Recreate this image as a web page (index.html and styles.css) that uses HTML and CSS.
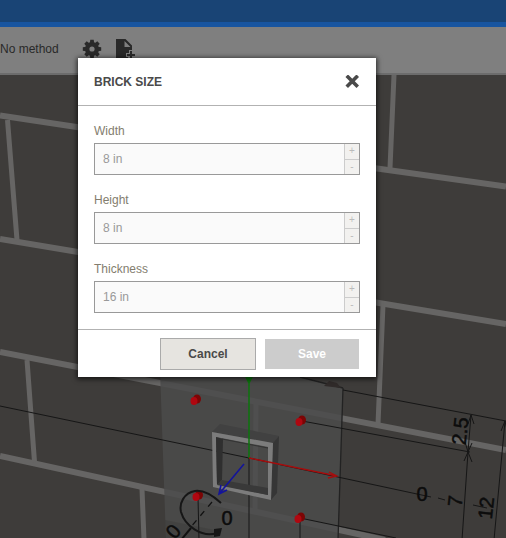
FILE: index.html
```html
<!DOCTYPE html>
<html lang="en">
<head>
  <meta charset="UTF-8">
  <meta name="viewport" content="width=device-width, initial-scale=1.0">
  <title>Brick Size</title>
  <link rel="stylesheet" href="styles.css">
</head>
<body>
  <header class="topbar"></header>

  <nav class="toolbar">
    <span class="method">No method</span>
    <button type="button" class="tool" aria-label="Settings">
      <svg width="20" height="20" viewBox="0 0 20 20">
        <g fill="#292929">
          <path fill-rule="evenodd" d="M10 3a7 7 0 1 0 0 14a7 7 0 0 0 0-14zM10 7.400a2.600 2.600 0 1 1 0 5.200a2.600 2.600 0 0 1 0-5.200z"/>
          <path id="tooth" d="M7.800 4.500L8.300.8h3.400l.5 3.700z"/>
          <use href="#tooth" transform="rotate(45 10 10)"/>
          <use href="#tooth" transform="rotate(90 10 10)"/>
          <use href="#tooth" transform="rotate(135 10 10)"/>
          <use href="#tooth" transform="rotate(180 10 10)"/>
          <use href="#tooth" transform="rotate(225 10 10)"/>
          <use href="#tooth" transform="rotate(270 10 10)"/>
          <use href="#tooth" transform="rotate(315 10 10)"/>
        </g>
      </svg>
    </button>
    <button type="button" class="tool" aria-label="New document">
      <svg width="20" height="20" viewBox="0 0 20 20">
        <path fill="#292929" fill-rule="evenodd" d="M1 0h9.500L17 6.500V11h-3v3h-3v4h2v2H1zM9.500 2v6h6z"/>
        <path stroke="#292929" stroke-width="2" d="M16 12v8M12 16h8"/>
      </svg>
    </button>
  </nav>

  <main class="scene">
    <svg class="drawing" viewBox="0 75 506 463" preserveAspectRatio="xMinYMin slice">
      <!-- mortar joints -->
      <g class="mortar">
        <path d="M0 115.500L90 129M0 239L90 254M0 352L506 450M0 456L385 540"/>
        <path d="M370 167.500L506 186.500M370 301.500L506 324"/>
        <path class="upright" d="M7.500 120L17 240M27 360L34.500 462M142 489L144 540M394 75L390 168M383 305L378 424M256 404L255 512"/>
      </g>

      <!-- mounting plate -->
      <path class="plate" d="M160 370H280L343 388L338 540H166z"/>
      <path d="M165 520L215 530L214 540H166z" fill="#3c3b3a" opacity=".5"/>
      <path d="M343 388L338 540M300 377L343 388" stroke="#222" stroke-width="1.300" fill="none"/>
      <path d="M324 386l5-5 8 2 4 5z" fill="#302b2a"/>

      <!-- dimension lines -->
      <g class="dims">
        <path d="M0 406L249 458L417 494M343 390L506 421M302 421L470 452M300 518L396 538M249 458V540M198 497L199 540M300 519V540"/>
        <path d="M417 494L431 497M438 498l7 2M473 505l14 3"/>
        <path d="M471 415L468 452L462 540M505 421L494 540"/>
        <path d="M468 424l3-9 3 9M465 442l3 10 4-9M464 461l4-9 4 10M501 431l4-10 2 9"/>
      </g>

      <!-- hollow box -->
      <path d="M212 432L220 424L279 436L273 443z" fill="#414141"/>
      <path d="M273 443L279 436L277 493L271 500z" fill="#363636"/>
      <path fill-rule="evenodd" d="M212 432L273 443L271 500L213 487zM216 437L217 484L268 495L268 447z" fill="#7c7c7c"/>
      <path d="M216 437L223 439L222 480L217 485z" fill="#2f2f2f"/>
      <path d="M217 485L222 480L268 488V495z" fill="#393939"/>
      <path d="M222 439L268 448" stroke="#333"/>

      <!-- axes -->
      <path d="M249 377V458M246 377h6l-3 6z" stroke="#0d740d" stroke-width="1.500" fill="#0d740d"/>
      <path d="M249 458L337 476M329 472l8 4-9 2" stroke="#a50d0d" stroke-width="1.300" fill="none"/>
      <path d="M244 464L219 494M221 485l-2 9 8-4" stroke="#14149a" stroke-width="1.600" fill="none"/>
      <path d="M212 502L190 528" stroke="#111" stroke-width="1.300" stroke-dasharray="6 6"/>
      <path d="M191 528L181 540" stroke="#111" stroke-width="2"/>

      <!-- anchors -->
      <g id="anchor">
        <ellipse cx="197" cy="399" rx="4" ry="4.500" fill="#7c0505"/>
        <ellipse cx="194" cy="401" rx="3.500" ry="4" fill="#af0710"/>
      </g>
      <use href="#anchor" x="105" y="21"/>
      <use href="#anchor" x="2" y="96"/>
      <use href="#anchor" x="104" y="118"/>

      <!-- rotation arrow -->
      <path d="M221 503C210 493 202 490 195 491C184 493 179 503 181 512C185 526 202 538 217 533" stroke="#161616" stroke-width="2" fill="none"/>
      <path d="M214 529l8-1-2 8-6 1z" fill="#161616"/>

      <g class="values">
        <text x="227" y="525">0</text>
        <text transform="translate(174 532) rotate(-50)" y="6">0</text>
        <text x="422" y="501">0</text>
        <text transform="translate(460 431) rotate(-84)" y="7">2.5</text>
        <text transform="translate(455 501) rotate(-84)" y="7">7</text>
        <text transform="translate(486 508) rotate(-84)" y="7">12</text>
      </g>
    </svg>
  </main>

  <div class="overlay">
    <form class="dialog" role="dialog" aria-labelledby="dialog-title">
      <div class="dialog-header">
        <h1 id="dialog-title">BRICK SIZE</h1>
        <button type="button" class="close" aria-label="Close">
          <svg width="14" height="14" viewBox="0 0 14 14">
            <path d="M3 2l8.500 8.500M11.500 2l-8.500 8.500" stroke="#4a4a4a" stroke-width="3.600" stroke-linecap="square"/>
          </svg>
        </button>
      </div>

      <div class="dialog-body">
        <div class="field">
          <label for="width">Width</label>
          <div class="spinner">
            <input type="text" id="width" value="8 in" disabled>
            <div class="steps">
              <button type="button" disabled>+</button>
              <button type="button" disabled>-</button>
            </div>
          </div>
        </div>
        <div class="field">
          <label for="height">Height</label>
          <div class="spinner">
            <input type="text" id="height" value="8 in" disabled>
            <div class="steps">
              <button type="button" disabled>+</button>
              <button type="button" disabled>-</button>
            </div>
          </div>
        </div>
        <div class="field">
          <label for="thickness">Thickness</label>
          <div class="spinner">
            <input type="text" id="thickness" value="16 in" disabled>
            <div class="steps">
              <button type="button" disabled>+</button>
              <button type="button" disabled>-</button>
            </div>
          </div>
        </div>
      </div>

      <div class="dialog-footer">
        <button type="button" class="btn cancel">Cancel</button>
        <button type="submit" class="btn save" disabled>Save</button>
      </div>
    </form>
  </div>
</body>
</html>
```
FILE: styles.css
```css
* {
  box-sizing: border-box;
}
body {
  margin: 0;
  min-height: 100vh;
  display: flex;
  flex-direction: column;
  position: relative;
  overflow: hidden;
  font-family: "Liberation Sans", Arial, sans-serif;
  font-size: 12px;
  background: #3e3c3a;
}
button,
input {
  font: inherit;
  margin: 0;
  padding: 0;
}
.topbar {
  height: 27px;
  background: #194475;
  border-bottom: 5px solid #1855a0;
}
.toolbar {
  display: flex;
  align-items: center;
  height: 48px;
  padding-bottom: 2px;
  background: #7f7f7f;
  border-bottom: 2px solid #6c6c6c;
}
.method {
  color: #292929;
  white-space: nowrap;
  margin-right: 23px;
}
.tool {
  display: flex;
  border: none;
  background: none;
  margin-right: 13px;
}
.scene {
  flex: 1;
  display: flex;
}
.drawing {
  width: 100%;
  display: block;
}
.mortar {
  fill: none;
  stroke: #666564;
  stroke-width: 6;
}
.mortar .upright {
  stroke-width: 5;
}
.plate {
  fill: #4b4b4b;
  fill-opacity: 0.85;
}
.dims {
  fill: none;
  stroke: #161616;
  stroke-width: 1;
}
.values {
  fill: #0c0c0c;
  stroke: #0c0c0c;
  stroke-width: 0.5;
  font-size: 20px;
  text-anchor: middle;
}

/* Dialog */
.overlay {
  position: absolute;
  inset: 0;
  padding: 58px 78px;
}
.dialog {
  width: 298px;
  background: #fff;
  box-shadow: 0 1px 5px 1px rgba(0, 0, 0, 0.7);
}
.dialog-header {
  display: flex;
  align-items: center;
  justify-content: space-between;
  height: 48px;
  padding: 0 17px 0 16px;
  border-bottom: 1px solid #b2b2b2;
}
.dialog-header h1 {
  margin: 0;
  font-size: 12px;
  color: #4a4a4a;
}
.close {
  display: flex;
  border: none;
  background: none;
}
.dialog-body {
  display: flex;
  flex-direction: column;
  gap: 16px;
  padding: 16px;
}
.field label {
  display: block;
  line-height: 18px;
  margin-bottom: 3px;
  color: #837d6e;
}
.spinner {
  display: flex;
  height: 32px;
  border: 1px solid #999;
  background: #fafafa;
}
.spinner input {
  flex: 1;
  min-width: 0;
  padding-left: 8px;
  border: none;
  background: none;
  color: #999;
}
.steps {
  display: flex;
  flex-direction: column;
  width: 15px;
  border-left: 1px solid #ccc;
}
.steps button {
  flex: 1;
  border: none;
  background: #f2f1ef;
  color: #bbb;
  font-size: 10px;
  line-height: 10px;
}
.steps button + button {
  border-top: 1px solid #ccc;
}
.dialog-footer {
  display: flex;
  align-items: center;
  justify-content: flex-end;
  gap: 9px;
  height: 48px;
  padding-right: 17px;
  border-top: 1px solid #b2b2b2;
}
.btn {
  font-weight: bold;
}
.cancel {
  width: 96px;
  height: 32px;
  border: 1px solid #aaa;
  background: #e6e4e0;
  color: #4a4a4a;
}
.save {
  width: 94px;
  height: 30px;
  border: none;
  background: #ccc;
  color: #fff;
}
```
